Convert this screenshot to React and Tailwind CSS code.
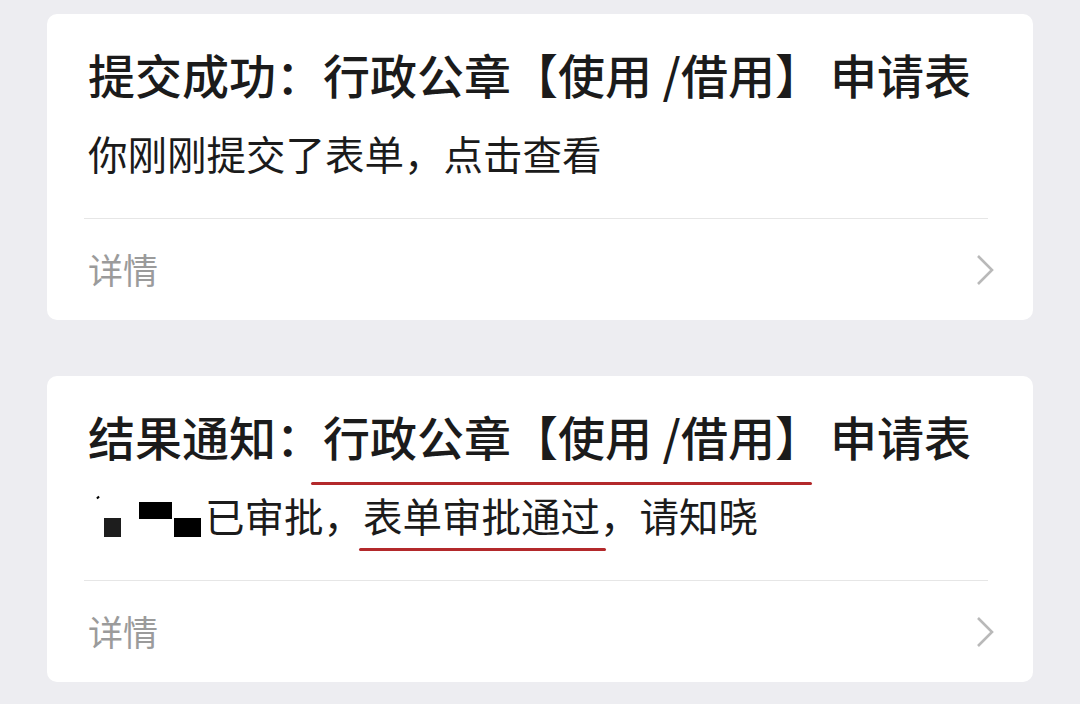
import React from 'react';

const font = { fontFamily: '"Noto Sans CJK SC", "Noto Sans", sans-serif' };

const Chevron = () => (
    <svg width="20" height="32" viewBox="0 0 20 32" fill="none" className="shrink-0">
        <polyline points="3,2 17,16 3,30" stroke="#b9b9b9" strokeWidth="2.6" strokeLinejoin="miter" />
    </svg>
);

// red pen annotation drawn over the text
const Marked = ({ children, left, right, bottom }) => (
    <span className="relative inline-block">
        {children}
        <span
            className="absolute h-[3px] rounded-full bg-[#b3292b]"
            style={{ left, right, bottom }}
        />
    </span>
);

const Redacted = () => (
    <span className="inline-flex h-[35px] align-middle mt-[-10px] mb-[-6px] mr-[4px]">
        <span className="ml-[9px] mt-[-6px] h-[3px] w-[2px] self-start rotate-45 bg-black" />
        <span className="ml-[5px] h-[19px] w-[17px] self-end bg-[#1d1d1d]" />
        <span className="ml-[18px] h-[17px] w-[33px] self-start bg-black" />
        <span className="ml-[2px] h-[19px] w-[27px] self-end bg-black" />
    </span>
);

const Card = ({ title, body }) => (
    <div className="w-[986px] rounded-[10px] bg-white">
        <div className="pl-[41px] pt-[30px] text-[47px] font-medium leading-[60px] text-[#1b1b1b] whitespace-nowrap">
            {title}
        </div>
        <div className="pl-[41px] pt-[24px] pb-[40px] text-[39.5px] leading-[50px] text-[#1b1b1b] whitespace-nowrap">
            {body}
        </div>
        <div className="ml-[37px] mr-[45px] h-px bg-[#e6e6e6]" />
        <div className="flex items-center justify-between pl-[41px] pr-[38px] h-[101px]">
            <span className="text-[35px] text-[#9b9b9b]">详情</span>
            <Chevron />
        </div>
    </div>
);

export default function App() {
    return (
        <div style={font} className="h-[704px] w-[1080px] overflow-hidden bg-[#ededf1] pl-[47px] pt-[14px]">
            <div className="flex flex-col gap-[56px]">
                <Card
                    title={<>提交成功：行政公章【使用 /借用】<span className="ml-[8px]">申请表</span></>}
                    body={<>你刚刚提交了表单，点击查看</>}
                />
                <Card
                    title={
                        <>
                            结果通知：
                            <Marked left="-12px" right="10px" bottom="-19px">行政公章【使用 /借用】</Marked>
                            <span className="ml-[8px]">申请表</span>
                        </>
                    }
                    body={
                        <>
                            <Redacted />
                            已审批，
                            <Marked left="-4px" right="-6px" bottom="-11px">表单审批通过</Marked>
                            ，请知晓
                        </>
                    }
                />
            </div>
        </div>
    );
}
